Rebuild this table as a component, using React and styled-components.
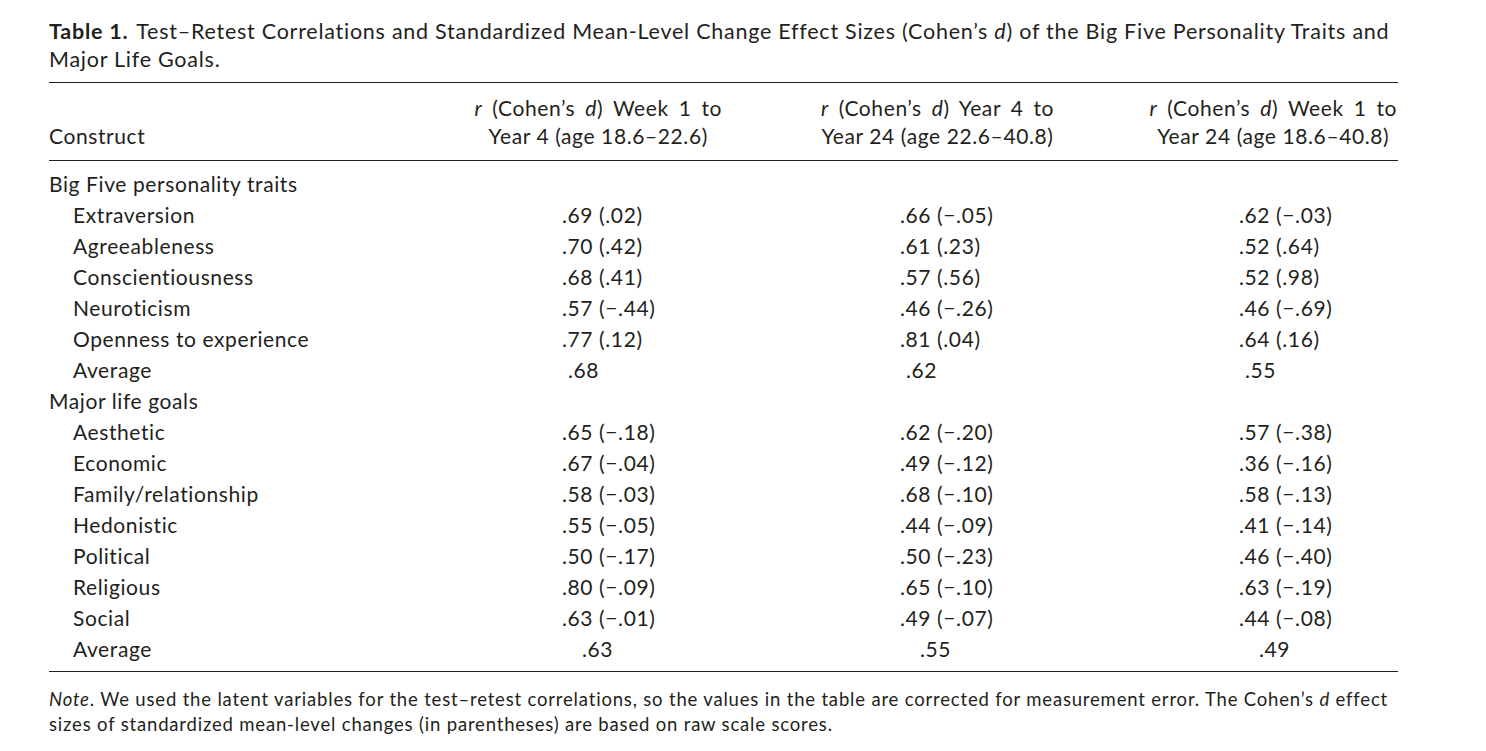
import React from 'react';
import styled, { createGlobalStyle } from 'styled-components';

const GlobalStyle = createGlobalStyle`
  html, body {
    margin: 0;
    padding: 0;
    background: #ffffff;
  }
  body {
    font-family: 'Lato', 'Open Sans', sans-serif;
    color: #231f20;
  }
`;

const Page = styled.div`
  width: 1349px;
  padding: 17px 0 0 49px;
`;

const Caption = styled.div`
  font-size: 21.5px;
  line-height: 28px;
  letter-spacing: 0.75px;
  white-space: nowrap;
`;

const CaptionLabel = styled.span`
  font-weight: 700;
  margin-right: 8px;
`;

const Table = styled.div`
  display: grid;
  grid-template-columns: 421px 260px 332px 336px;
  margin-top: 9px;
  padding-bottom: 7px;
  border-top: 1px solid #231f20;
  border-bottom: 1px solid #231f20;
  font-size: 21px;
  letter-spacing: 0.6px;
`;

const HeadCell = styled.div`
  display: flex;
  align-items: flex-end;
  justify-content: ${(p) => (p.$first ? 'flex-start' : 'flex-end')};
  padding: 11px ${(p) => p.$padRight || 0}px 10px 0;
  line-height: 28px;
  border-bottom: 1px solid #231f20;
  margin-bottom: 7px;
`;

const HeadText = styled.div`
  text-align: center;
  white-space: nowrap;
`;

const HeadLine = styled.span`
  word-spacing: 4px;
`;

const Cell = styled.div`
  line-height: 31px;
  white-space: nowrap;
  padding-left: ${(p) => p.$pad || 0}px;
`;

const Label = styled(Cell)`
  padding-left: ${(p) => (p.$group ? 0 : 24)}px;
`;

const Note = styled.div`
  font-size: 18.5px;
  line-height: 25px;
  letter-spacing: 0.82px;
  margin-top: 15px;
  white-space: nowrap;
`;

const columns = [
  { head: ['Week 1 to', 'Year 4 (age 18.6–22.6)'], padRight: 8, pad: 92 },
  { head: ['Year 4 to', 'Year 24 (age 22.6–40.8)'], padRight: 8, pad: 170 },
  { head: ['Week 1 to', 'Year 24 (age 18.6–40.8)'], padRight: 1, pad: 177 },
];

const groups = [
  {
    title: 'Big Five personality traits',
    avgIndent: 6,
    rows: [
      ['Extraversion', '.69 (.02)', '.66 (−.05)', '.62 (−.03)'],
      ['Agreeableness', '.70 (.42)', '.61 (.23)', '.52 (.64)'],
      ['Conscientiousness', '.68 (.41)', '.57 (.56)', '.52 (.98)'],
      ['Neuroticism', '.57 (−.44)', '.46 (−.26)', '.46 (−.69)'],
      ['Openness to experience', '.77 (.12)', '.81 (.04)', '.64 (.16)'],
    ],
    avg: ['.68', '.62', '.55'],
  },
  {
    title: 'Major life goals',
    avgIndent: 20,
    rows: [
      ['Aesthetic', '.65 (−.18)', '.62 (−.20)', '.57 (−.38)'],
      ['Economic', '.67 (−.04)', '.49 (−.12)', '.36 (−.16)'],
      ['Family/relationship', '.58 (−.03)', '.68 (−.10)', '.58 (−.13)'],
      ['Hedonistic', '.55 (−.05)', '.44 (−.09)', '.41 (−.14)'],
      ['Political', '.50 (−.17)', '.50 (−.23)', '.46 (−.40)'],
      ['Religious', '.80 (−.09)', '.65 (−.10)', '.63 (−.19)'],
      ['Social', '.63 (−.01)', '.49 (−.07)', '.44 (−.08)'],
    ],
    avg: ['.63', '.55', '.49'],
  },
];

function HeaderRow() {
  return (
    <>
      <HeadCell $first>
        <HeadText>Construct</HeadText>
      </HeadCell>
      {columns.map((c, i) => (
        <HeadCell key={i} $padRight={c.padRight}>
          <HeadText>
            <HeadLine>
              <i>r</i> (Cohen’s <i>d</i>) {c.head[0]}
            </HeadLine>
            <br />
            {c.head[1]}
          </HeadText>
        </HeadCell>
      ))}
    </>
  );
}

function Group({ group }) {
  return (
    <>
      <Label $group>{group.title}</Label>
      <Cell />
      <Cell />
      <Cell />
      {group.rows.map((row) => (
        <React.Fragment key={row[0]}>
          <Label>{row[0]}</Label>
          {row.slice(1).map((v, i) => (
            <Cell key={i} $pad={columns[i].pad}>
              {v}
            </Cell>
          ))}
        </React.Fragment>
      ))}
      <Label>Average</Label>
      {group.avg.map((v, i) => (
        <Cell key={i} $pad={columns[i].pad + group.avgIndent}>
          {v}
        </Cell>
      ))}
    </>
  );
}

export default function App() {
  return (
    <Page>
      <GlobalStyle />
      <Caption>
        <CaptionLabel>Table 1.</CaptionLabel>
        Test–Retest Correlations and Standardized Mean-Level Change Effect Sizes (Cohen’s <i>d</i>) of the Big Five
        Personality Traits and
        <br />
        Major Life Goals.
      </Caption>
      <Table>
        <HeaderRow />
        {groups.map((g) => (
          <Group key={g.title} group={g} />
        ))}
      </Table>
      <Note>
        <i>Note</i>. We used the latent variables for the test–retest correlations, so the values in the table are
        corrected for measurement error. The Cohen’s <i>d</i> effect
        <br />
        sizes of standardized mean-level changes (in parentheses) are based on raw scale scores.
      </Note>
    </Page>
  );
}
